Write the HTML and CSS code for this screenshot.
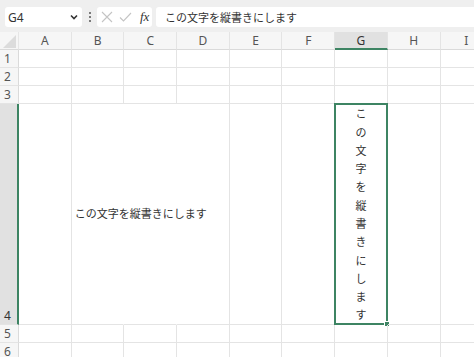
FILE: index.html
```html
<!DOCTYPE html>
<html lang="ja">
<head>
<meta charset="utf-8">
<link rel="stylesheet" href="styles.css">
</head>
<body>
<div class="app">
  <div class="toolbar">
    <div class="namebox">
      <span class="name">G4</span>
      <svg class="chev" width="8" height="6" viewBox="0 0 8 6"><path d="M1 1.5 L4 4.5 L7 1.5" fill="none" stroke="#333" stroke-width="1.6"/></svg>
    </div>
    <div class="dots"><svg width="4" height="12" viewBox="0 0 4 12"><circle cx="2" cy="2" r="1" fill="#555"/><circle cx="2" cy="6" r="1" fill="#555"/><circle cx="2" cy="10" r="1" fill="#555"/></svg></div>
    <div class="fxbox">
      <svg width="12" height="12" viewBox="0 0 12 12"><path d="M1 1 L11 11 M11 1 L1 11" stroke="#c4c4c4" stroke-width="1.1" fill="none"/></svg>
      <svg width="13" height="12" viewBox="0 0 13 12"><path d="M1 6.5 L4.5 10 L12 2" stroke="#c4c4c4" stroke-width="1.1" fill="none"/></svg>
      <span class="fx">fx</span>
    </div>
    <div class="formula">この文字を縦書きにします</div>
  </div>
  <div class="sheet">
    <div class="corner"><svg width="19" height="18" viewBox="0 0 19 18"><polygon points="16,3 16,16 3,16" fill="#dcdcdc"/></svg></div>
    <div class="ch">A</div><div class="ch">B</div><div class="ch">C</div><div class="ch">D</div><div class="ch">E</div><div class="ch">F</div><div class="ch ch-sel">G</div><div class="ch">H</div><div class="ch">I</div>

    <div class="rh">1</div><div class="c"></div><div class="c"></div><div class="c"></div><div class="c"></div><div class="c"></div><div class="c"></div><div class="c"></div><div class="c"></div><div class="c"></div>
    <div class="rh">2</div><div class="c"></div><div class="c"></div><div class="c"></div><div class="c"></div><div class="c"></div><div class="c"></div><div class="c"></div><div class="c"></div><div class="c"></div>
    <div class="rh">3</div><div class="c"></div><div class="c"></div><div class="c"></div><div class="c"></div><div class="c"></div><div class="c"></div><div class="c"></div><div class="c"></div><div class="c"></div>

    <div class="rh rh-sel tall">4</div>
    <div class="c tall"></div>
    <div class="c tall over"><span class="htext">この文字を縦書きにします</span></div>
    <div class="c tall nb"></div><div class="c tall"></div><div class="c tall"></div><div class="c tall"></div>
    <div class="c tall sel"><div class="vtext">この文字を縦書きにします</div><span class="handle"></span></div>
    <div class="c tall"></div><div class="c tall"></div>

    <div class="rh">5</div><div class="c"></div><div class="c"></div><div class="c"></div><div class="c"></div><div class="c"></div><div class="c"></div><div class="c"></div><div class="c"></div><div class="c"></div>
    <div class="rh">6</div><div class="c"></div><div class="c"></div><div class="c"></div><div class="c"></div><div class="c"></div><div class="c"></div><div class="c"></div><div class="c"></div><div class="c"></div>
  </div>
</div>
</body>
</html>
```
FILE: styles.css
```css
* { box-sizing: border-box; }
html, body { margin: 0; padding: 0; }
body {
  width: 474px;
  height: 357px;
  overflow: hidden;
  background: #fff;
  font-family: "Noto Sans", "Noto Sans CJK JP", sans-serif;
}
.app { width: 474px; height: 357px; overflow: hidden; }
.toolbar {
  height: 32px;
  background: #efefef;
  display: flex;
  align-items: flex-start;
  padding: 7px 0 0 5px;
}
.namebox {
  width: 77px;
  height: 20px;
  background: #fff;
  border-radius: 3px;
  display: flex;
  align-items: center;
  justify-content: space-between;
  padding: 0 4px 0 3px;
}
.name { font-size: 12px; color: #333; font-family: "Noto Sans", sans-serif; }
.chev { display: block; }
.dots { width: 15px; height: 20px; display: flex; align-items: center; justify-content: center; }
.dots svg { display: block; }
.fxbox {
  width: 55px;
  height: 20px;
  background: #fff;
  border-radius: 3px;
  display: flex;
  align-items: center;
  gap: 6px;
  padding-left: 4px;
}
.fxbox svg { display: block; }
.fx {
  font-family: "Liberation Serif", serif;
  font-style: italic;
  font-size: 13px;
  color: #333;
  margin-left: 2px;
}
.formula {
  margin-left: 4px;
  flex: 1;
  height: 20px;
  background: #fff;
  border-radius: 3px 0 0 3px;
  font-family: "Noto Sans CJK JP", sans-serif;
  font-size: 11px;
  line-height: 20px;
  color: #333;
  padding-left: 9px;
}
.sheet {
  display: grid;
  grid-template-columns: 19px repeat(9, 52.7px);
  grid-template-rows: 18px 18px 18px 18px 221px 18px 18px;
}
.corner { background: #f6f6f6; border-right: 1px solid #e6e6e6; border-bottom: 1px solid #dadada; }
.corner svg { display: block; }
.ch {
  background: #f6f6f6;
  border-right: 1px solid #e4e4e4;
  border-bottom: 1px solid #dadada;
  font-size: 12px;
  color: #555;
  text-align: center;
  line-height: 17px;
}
.ch-sel { background: #e1e1e1; border-bottom: 2px solid #3d8463; color: #333; }
.rh {
  background: #f6f6f6;
  border-right: 1px solid #dadada;
  border-bottom: 1px solid #e4e4e4;
  font-size: 12px;
  color: #555;
  text-align: left;
  padding-left: 4px;
  line-height: 17px;
}
.rh.tall { display: flex; align-items: flex-end; }
.rh-sel { background: #e1e1e1; border-right: 2px solid #3d8463; color: #333; }
.c { border-right: 1px solid #e4e4e4; border-bottom: 1px solid #e4e4e4; position: relative; }
.c.nb, .c.over { border-right-color: transparent; }
.htext {
  position: absolute;
  left: 3px;
  top: 101px;
  white-space: nowrap;
  font-family: "Noto Sans CJK JP", sans-serif;
  font-size: 11px;
  line-height: 16px;
  color: #333;
}
.sel {
  border: 2px solid #3d8463;
  margin-left: -1px;
  margin-top: -1px;
  display: flex;
  align-items: center;
  justify-content: center;
}
.vtext {
  width: 11px;
  word-break: break-all;
  font-family: "Noto Sans CJK JP", sans-serif;
  font-size: 11px;
  line-height: 18.3px;
  color: #333;
  text-align: center;
}
.handle {
  position: absolute;
  right: -4px;
  bottom: -4px;
  width: 6px;
  height: 6px;
  background: #3d8463;
  border: 1px solid #fff;
}
```
